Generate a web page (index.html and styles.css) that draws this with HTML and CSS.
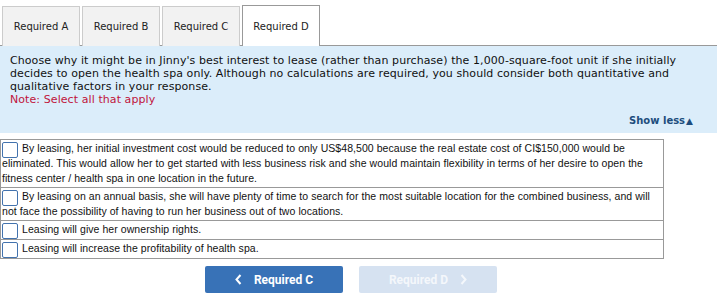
FILE: index.html
```html
<!DOCTYPE html>
<html>
<head>
<meta charset="utf-8">
<link rel="stylesheet" href="styles.css">
</head>
<body>
<div class="tabs">
  <div class="tab">Required A</div>
  <div class="tab">Required B</div>
  <div class="tab">Required C</div>
  <div class="tab active">Required D</div>
</div>
<div class="panel">
  <p class="question">Choose why it might be in Jinny's best interest to lease (rather than purchase) the 1,000-square-foot unit if she initially decides to open the health spa only. Although no calculations are required, you should consider both quantitative and qualitative factors in your response.</p>
  <p class="note">Note: Select all that apply</p>
  <div class="showless">Show less<span class="tri">▲</span></div>
</div>
<div class="options">
  <div class="opt"><span class="cb"></span>By leasing, her initial investment cost would be reduced to only US$48,500 because the real estate cost of CI$150,000 would be eliminated. This would allow her to get started with less business risk and she would maintain flexibility in terms of her desire to open the fitness center / health spa in one location in the future.</div>
  <div class="opt"><span class="cb"></span>By leasing on an annual basis, she will have plenty of time to search for the most suitable location for the combined business, and will not face the possibility of having to run her business out of two locations.</div>
  <div class="opt"><span class="cb"></span>Leasing will give her ownership rights.</div>
  <div class="opt"><span class="cb"></span>Leasing will increase the profitability of health spa.</div>
</div>
<div class="nav">
  <button class="btn prev"><svg class="chev" width="7" height="11" viewBox="0 0 7 11"><path d="M5.5 1 L1.5 5.5 L5.5 10" fill="none" stroke="#fff" stroke-width="2"/></svg>Required C</button>
  <button class="btn next">Required D<svg class="chev" width="7" height="11" viewBox="0 0 7 11"><path d="M1.5 1 L5.5 5.5 L1.5 10" fill="none" stroke="#fff" stroke-width="2"/></svg></button>
</div>
</body>
</html>
```
FILE: styles.css
```css
* { box-sizing: border-box; }
body { margin: 0; background: #fff; width: 717px; height: 302px; overflow: hidden; font-family: "DejaVu Sans", Verdana, sans-serif; }
.tabs { display: flex; gap: 2px; padding: 6px 0 0 2px; border-bottom: 1px solid #999; height: 46px; }
.tab { width: 78px; height: 40px; background: #f2f2f2; border: 1px solid #ccc; border-bottom: none; font-size: 10px; color: #222; display: flex; align-items: center; justify-content: center; }
.tab.active { background: #fff; border: 1px solid #999; border-bottom: none; height: 41px; margin-top: -1px; margin-bottom: -1px; position: relative; }
.panel { background: #dbedfa; padding: 8px 10px 6px 10px; height: 87px; position: relative; }
.question { margin: 0; max-width: 668px; font-size: 11px; line-height: 13px; color: #111; letter-spacing: 0.08px; }
.note { margin: 0; font-size: 11px; line-height: 13px; color: #c0143c; letter-spacing: 0.08px; }
.showless { position: absolute; right: 24px; bottom: 7px; font-size: 10px; font-weight: bold; color: #1d4d7d; }
.tri { font-size: 9px; margin-left: 1px; }
.options { margin-top: 6px; width: 664px; border: 1px solid #999; border-bottom: none; font-family: "Liberation Sans", Arial, sans-serif; font-size: 10.5px; letter-spacing: 0.06px; color: #111; }
.opt { border-bottom: 1px solid #999; line-height: 15px; padding: 1px; min-height: 19px; }
.cb { display: inline-block; width: 16px; height: 16px; border: 1px solid #4272ad; border-radius: 2px; vertical-align: -4px; margin: -2px 4px -2px 0; background: #fff; }
.nav { display: flex; gap: 16px; padding-left: 205px; margin-top: 7px; }
.btn { width: 138px; height: 27px; border: none; border-radius: 2px; font-family: Roboto, sans-serif; font-weight: bold; font-size: 12px; color: #fff; display: flex; align-items: center; justify-content: center; gap: 12px; }
.prev { background: #3872b7; }
.next { background: #d6e2f1; color: #f4f7fb; }
.next .chev path { stroke: #f4f7fb; }
```
